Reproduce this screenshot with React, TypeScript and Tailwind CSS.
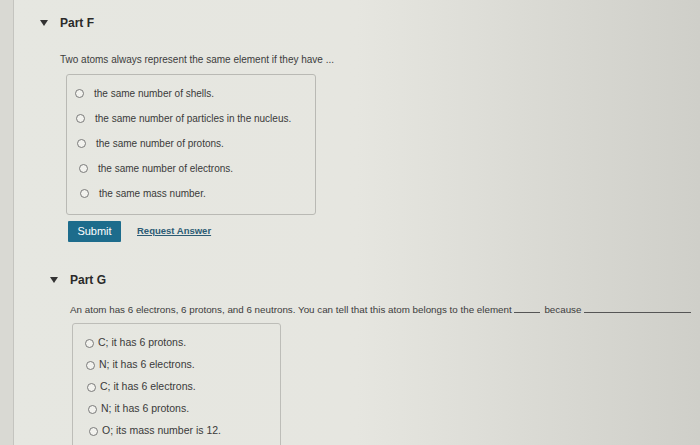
import React from "react";

// small left drift on each row, the reference photo is slightly skewed
const partF = [
  { text: "the same number of shells.", shift: "pl-[0px]" },
  { text: "the same number of particles in the nucleus.", shift: "pl-[1px]" },
  { text: "the same number of protons.", shift: "pl-[2px]" },
  { text: "the same number of electrons.", shift: "pl-[4px]" },
  { text: "the same mass number.", shift: "pl-[5px]" },
];

const partG = [
  { text: "C; it has 6 protons.", shift: "pl-[0px]" },
  { text: "N; it has 6 electrons.", shift: "pl-[1px]" },
  { text: "C; it has 6 electrons.", shift: "pl-[2px]" },
  { text: "N; it has 6 protons.", shift: "pl-[3px]" },
  { text: "O; its mass number is 12.", shift: "pl-[4px]" },
];

function Caret() {
  return (
    <svg width="8" height="6" viewBox="0 0 8 6" className="shrink-0">
      <path d="M0 0 L8 0 L4 6 Z" fill="#333" />
    </svg>
  );
}

function Radio() {
  return <span className="inline-block w-[9px] h-[9px] rounded-full border border-[#7a7a7a] bg-[#f2f2ee] shrink-0" />;
}

export default function App() {
  return (
    <div
      className="w-[700px] h-[445px] overflow-hidden flex bg-[#dcdcd6] text-[#333]"
      style={{ fontFamily: '"Liberation Sans", Arial, sans-serif' }}
    >
      <div className="w-[13px] shrink-0 bg-[#d9d9d3]" />
      <div className="flex-1 border-l border-[#c4c4bf] bg-linear-to-r from-[#e6e7e1] via-[#e6e6e0] to-[#cfcfc9]">
        {/* Part F */}
        <div className="pl-[26px] pt-[16px]">
          <div className="flex items-center gap-[12px] h-[14px]">
            <Caret />
            <span className="text-[12px] font-semibold text-[#2a2a2a]">Part F</span>
          </div>
          <div className="pl-[20px] pt-[24px]">
            <p className="text-[10px] leading-[12px] text-[#3c3c3c]">Two atoms always represent the same element if they have ...</p>
            <div className="mt-[8px] ml-[6px] w-[250px] h-[141px] rounded-[3px] border border-[#b9b9b4] pt-[12px] pl-[8px] flex flex-col gap-[13px]">
              {partF.map((o) => (
                <div key={o.text} className={`flex items-center gap-[10px] h-[12px] ${o.shift}`}>
                  <Radio />
                  <span className="text-[10px] text-[#3a3a3a]">{o.text}</span>
                </div>
              ))}
            </div>
            <div className="mt-[6px] ml-[8px] flex items-center gap-[16px]">
              <button className="w-[53px] h-[21px] bg-[#1d6c8c] text-white text-[11px] rounded-[1px]">Submit</button>
              <a className="text-[9.5px] font-semibold text-[#2c5b74] underline">Request Answer</a>
            </div>
          </div>
        </div>

        {/* Part G */}
        <div className="pl-[36px] mt-[31px]">
          <div className="flex items-center gap-[12px] h-[14px]">
            <Caret />
            <span className="text-[12px] font-semibold text-[#2a2a2a]">Part G</span>
          </div>
          <div className="pl-[20px] pt-[17px]">
            <p className="text-[9.8px] leading-[12px] text-[#3c3c3c] whitespace-nowrap">
              An atom has 6 electrons, 6 protons, and 6 neutrons. You can tell that this atom belongs to the element
              <span className="inline-block w-[26px] border-b border-[#555] mx-[2px]" /> because
              <span className="inline-block w-[107px] border-b border-[#555] ml-[3px]" />
            </p>
            <div className="mt-[7px] ml-[2px] w-[209px] h-[140px] rounded-[3px] border border-[#bdbdb8] pt-[13px] pl-[12px] flex flex-col gap-[10px]">
              {partG.map((o) => (
                <div key={o.text} className={`flex items-center gap-[4px] h-[12px] ${o.shift}`}>
                  <Radio />
                  <span className="text-[10.5px] text-[#3a3a3a]">{o.text}</span>
                </div>
              ))}
            </div>
          </div>
        </div>
      </div>
    </div>
  );
}
